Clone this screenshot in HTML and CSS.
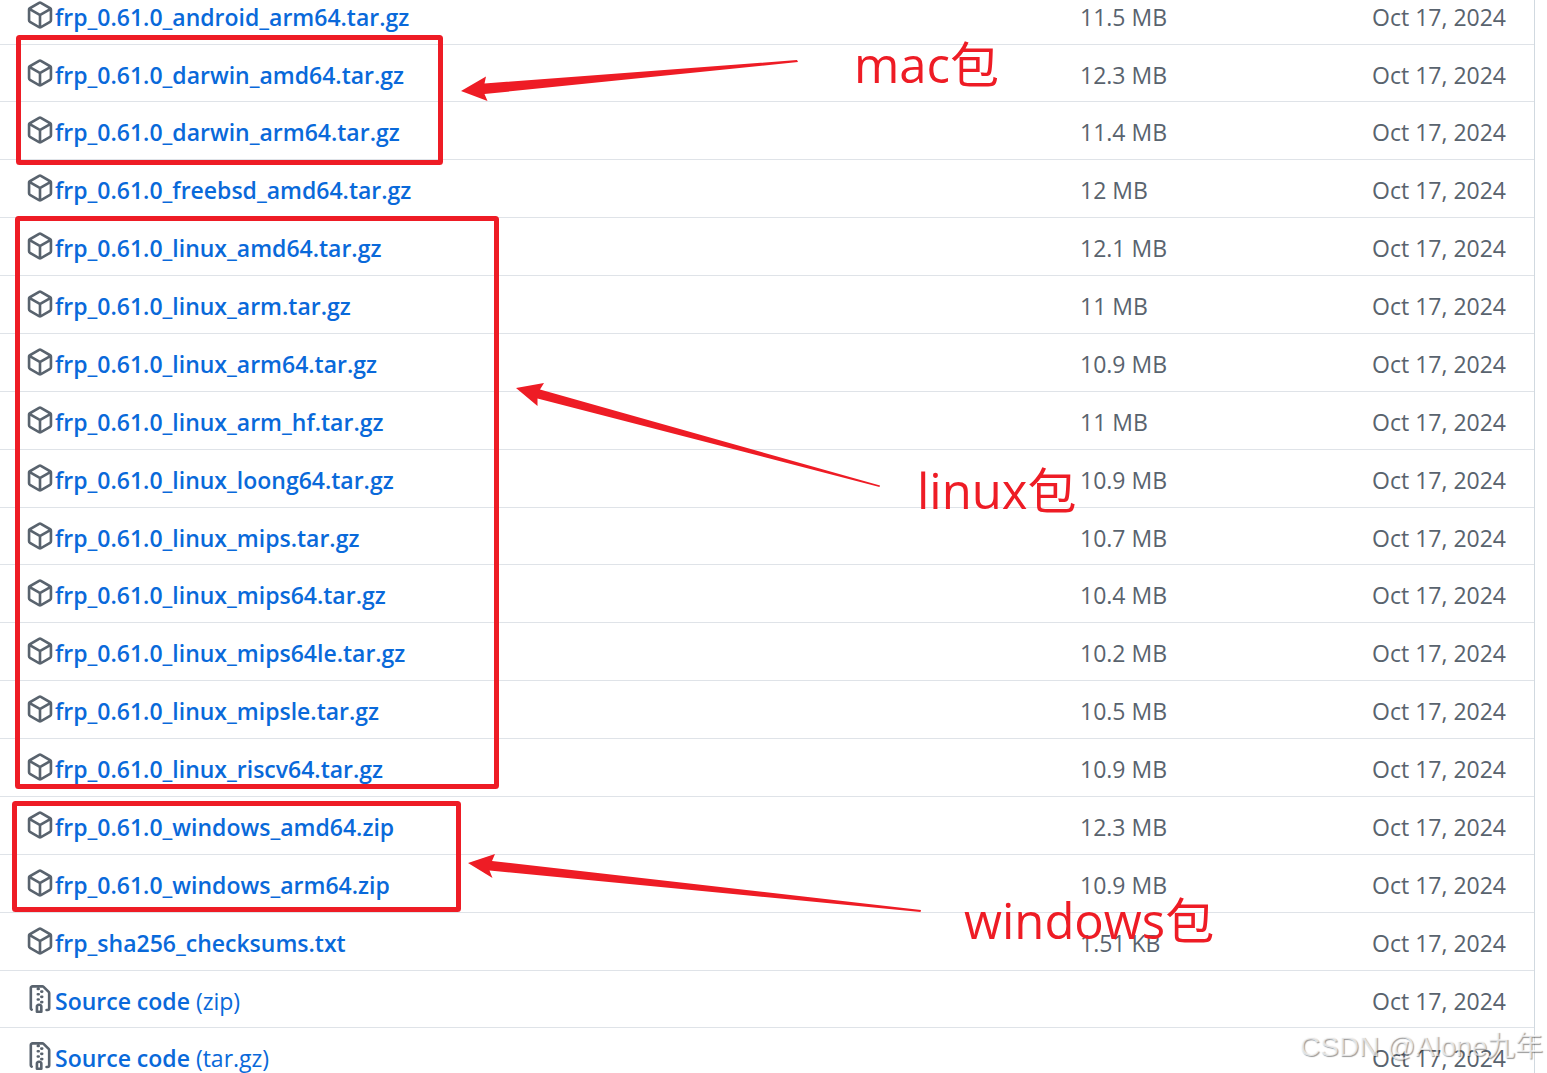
FILE: index.html
```
<!DOCTYPE html>
<html lang="en">
<head>
    <meta charset="UTF-8">
    <meta name="viewport" content="width=device-width, initial-scale=1.0">
    <title>frp 0.61.0 assets</title>
    <link rel="stylesheet" href="styles.css">
</head>
<body>
    <svg class="sprite" aria-hidden="true">
        <symbol id="package" viewBox="0 0 16 16">
            <path d="m8.878.392 5.25 3.045c.54.314.872.89.872 1.514v6.098a1.75 1.75 0 0 1-.872 1.514l-5.25 3.045a1.75 1.75 0 0 1-1.756 0l-5.25-3.045A1.75 1.75 0 0 1 1 11.049V4.951c0-.624.332-1.201.872-1.514L7.122.392a1.75 1.75 0 0 1 1.756 0ZM7.875 1.69l-4.63 2.685L8 7.133l4.755-2.758-4.63-2.685a.248.248 0 0 0-.25 0ZM2.5 5.677v5.372c0 .09.047.171.125.216l4.625 2.683V8.432Zm6.25 8.271 4.625-2.683a.25.25 0 0 0 .125-.216V5.677L8.75 8.432Z"/>
        </symbol>
        <symbol id="zip" viewBox="0 0 16 16">
            <path d="M3.5 1.75v11.5c0 .09.048.173.126.217a.75.75 0 0 1-.752 1.298A1.748 1.748 0 0 1 2 13.25V1.75C2 .784 2.784 0 3.75 0h5.586c.464 0 .909.185 1.237.513l2.914 2.914c.329.328.513.773.513 1.237v8.586A1.75 1.75 0 0 1 12.25 15h-.5a.75.75 0 0 1 0-1.5h.5a.25.25 0 0 0 .25-.25V4.664a.25.25 0 0 0-.073-.177L9.513 1.573a.25.25 0 0 0-.177-.073H7.25a.75.75 0 0 1 0 1.5h-.5a.75.75 0 0 1 0-1.5h-3a.25.25 0 0 0-.25.25Zm3.75 8.75h.5c.966 0 1.75.784 1.75 1.75v3a.75.75 0 0 1-.75.75h-2.5a.75.75 0 0 1-.75-.75v-3c0-.966.784-1.75 1.75-1.75ZM6 5.25a.75.75 0 0 1 .75-.75h.5a.75.75 0 0 1 0 1.5h-.5A.75.75 0 0 1 6 5.25Zm.75 2.25h.5a.75.75 0 0 1 0 1.5h-.5a.75.75 0 0 1 0-1.5ZM8 6.75A.75.75 0 0 1 8.75 6h.5a.75.75 0 0 1 0 1.5h-.5A.75.75 0 0 1 8 6.75ZM8.75 3h.5a.75.75 0 0 1 0 1.5h-.5a.75.75 0 0 1 0-1.5ZM8 9.75A.75.75 0 0 1 8.75 9h.5a.75.75 0 0 1 0 1.5h-.5A.75.75 0 0 1 8 9.75Zm-1 2.5v2.25h1v-2.25a.25.25 0 0 0-.25-.25h-.5a.25.25 0 0 0-.25.25Z"/>
        </symbol>
    </svg>

    <main class="release">
        <table class="assets">
            <tbody>
                <tr><td><div class="file"><svg class="icon"><use href="#package"/></svg><a href="#">frp_0.61.0_android_arm64.tar.gz</a></div></td><td class="size">11.5 MB</td><td class="date">Oct 17, 2024</td></tr>
                <tr><td><div class="file"><svg class="icon"><use href="#package"/></svg><a href="#">frp_0.61.0_darwin_amd64.tar.gz</a></div></td><td class="size">12.3 MB</td><td class="date">Oct 17, 2024</td></tr>
                <tr><td><div class="file"><svg class="icon"><use href="#package"/></svg><a href="#">frp_0.61.0_darwin_arm64.tar.gz</a></div></td><td class="size">11.4 MB</td><td class="date">Oct 17, 2024</td></tr>
                <tr><td><div class="file"><svg class="icon"><use href="#package"/></svg><a href="#">frp_0.61.0_freebsd_amd64.tar.gz</a></div></td><td class="size">12 MB</td><td class="date">Oct 17, 2024</td></tr>
                <tr><td><div class="file"><svg class="icon"><use href="#package"/></svg><a href="#">frp_0.61.0_linux_amd64.tar.gz</a></div></td><td class="size">12.1 MB</td><td class="date">Oct 17, 2024</td></tr>
                <tr><td><div class="file"><svg class="icon"><use href="#package"/></svg><a href="#">frp_0.61.0_linux_arm.tar.gz</a></div></td><td class="size">11 MB</td><td class="date">Oct 17, 2024</td></tr>
                <tr><td><div class="file"><svg class="icon"><use href="#package"/></svg><a href="#">frp_0.61.0_linux_arm64.tar.gz</a></div></td><td class="size">10.9 MB</td><td class="date">Oct 17, 2024</td></tr>
                <tr><td><div class="file"><svg class="icon"><use href="#package"/></svg><a href="#">frp_0.61.0_linux_arm_hf.tar.gz</a></div></td><td class="size">11 MB</td><td class="date">Oct 17, 2024</td></tr>
                <tr><td><div class="file"><svg class="icon"><use href="#package"/></svg><a href="#">frp_0.61.0_linux_loong64.tar.gz</a></div></td><td class="size">10.9 MB</td><td class="date">Oct 17, 2024</td></tr>
                <tr><td><div class="file"><svg class="icon"><use href="#package"/></svg><a href="#">frp_0.61.0_linux_mips.tar.gz</a></div></td><td class="size">10.7 MB</td><td class="date">Oct 17, 2024</td></tr>
                <tr><td><div class="file"><svg class="icon"><use href="#package"/></svg><a href="#">frp_0.61.0_linux_mips64.tar.gz</a></div></td><td class="size">10.4 MB</td><td class="date">Oct 17, 2024</td></tr>
                <tr><td><div class="file"><svg class="icon"><use href="#package"/></svg><a href="#">frp_0.61.0_linux_mips64le.tar.gz</a></div></td><td class="size">10.2 MB</td><td class="date">Oct 17, 2024</td></tr>
                <tr><td><div class="file"><svg class="icon"><use href="#package"/></svg><a href="#">frp_0.61.0_linux_mipsle.tar.gz</a></div></td><td class="size">10.5 MB</td><td class="date">Oct 17, 2024</td></tr>
                <tr><td><div class="file"><svg class="icon"><use href="#package"/></svg><a href="#">frp_0.61.0_linux_riscv64.tar.gz</a></div></td><td class="size">10.9 MB</td><td class="date">Oct 17, 2024</td></tr>
                <tr><td><div class="file"><svg class="icon"><use href="#package"/></svg><a href="#">frp_0.61.0_windows_amd64.zip</a></div></td><td class="size">12.3 MB</td><td class="date">Oct 17, 2024</td></tr>
                <tr><td><div class="file"><svg class="icon"><use href="#package"/></svg><a href="#">frp_0.61.0_windows_arm64.zip</a></div></td><td class="size">10.9 MB</td><td class="date">Oct 17, 2024</td></tr>
                <tr><td><div class="file"><svg class="icon"><use href="#package"/></svg><a href="#">frp_sha256_checksums.txt</a></div></td><td class="size">1.51 KB</td><td class="date">Oct 17, 2024</td></tr>
                <tr><td><div class="file"><svg class="icon"><use href="#zip"/></svg><a href="#">Source code <span class="format">(zip)</span></a></div></td><td class="size"></td><td class="date">Oct 17, 2024</td></tr>
                <tr><td><div class="file"><svg class="icon"><use href="#zip"/></svg><a href="#">Source code <span class="format">(tar.gz)</span></a></div></td><td class="size"></td><td class="date">Oct 17, 2024</td></tr>
            </tbody>
        </table>
    </main>

    <!-- hand drawn notes over the list -->
    <div class="notes">
        <svg class="marks" aria-hidden="true">
            <g class="frames">
                <rect x="18.5" y="37.5" width="422" height="125" rx="1"/>
                <rect x="17.5" y="218.5" width="479" height="568" rx="1"/>
                <rect x="14.5" y="803.5" width="444" height="106" rx="1"/>
            </g>
            <g class="arrows">
                <polygon points="461,91 486,76.5 484.5,83.5 797,60 798,62 484.5,94 487.5,101"/>
                <polygon points="516,388 544,383 540,389.5 880,485.5 879.5,487 537.5,398.5 537.5,406"/>
                <polygon points="468,863 495,854 492,861 921,910 920.5,912 489.5,870.5 492.5,878"/>
            </g>
        </svg>
        <span class="label mac">mac包</span>
        <span class="label linux">linux包</span>
        <span class="label windows">windows包</span>
        <span class="watermark">CSDN @Alone九年</span>
    </div>
</body>
</html>
```
FILE: styles.css
```
* {
    box-sizing: border-box;
}
body {
    position: relative;
    height: 100vh;
    margin: 0;
    overflow: hidden;
    background-color: #fff;
    color: #59636e;
    font-family: "Segoe UI", "Open Sans", "Noto Sans CJK SC", sans-serif;
    font-size: 23px;
    line-height: 36px;
}
.sprite {
    position: absolute;
    width: 0;
    height: 0;
}
/* the list is scrolled part of a row down */
.release {
    margin: -13px 12px 0 0;
    border-right: 1px solid #d1d9e0;
}
.assets {
    width: 100%;
    table-layout: fixed;
    border-collapse: separate;
    border-spacing: 0;
}
.assets tr {
    height: 58px;
}
.assets tr:nth-child(8n+2) {
    height: 57px;
}
.assets td {
    padding: 12px 0 0;
    border-bottom: 1px solid #dfe3e8;
    vertical-align: top;
    white-space: nowrap;
}
.file {
    display: flex;
    align-items: center;
    padding-left: 26px;
}
.icon {
    flex: none;
    width: 28px;
    height: 28px;
    margin: 0 1px 4px 0;
    fill: #59636e;
}
.file a {
    color: #0969da;
    font-weight: 600;
    text-decoration: none;
}
.file a:hover {
    text-decoration: underline;
}
.format {
    font-weight: 400;
}
.assets .size {
    width: 290px;
}
.assets .date {
    width: 164px;
    padding-right: 28px;
    text-align: right;
}
.notes {
    position: absolute;
    inset: 0;
    pointer-events: none;
}
.marks {
    width: 100%;
    height: 100%;
}
.frames {
    fill: none;
    stroke: #ee1c25;
    stroke-width: 5;
}
.arrows {
    fill: #ee1c25;
}
.label {
    position: absolute;
    color: #ee1c25;
    font-size: 49px;
    line-height: 64px;
    white-space: nowrap;
}
.mac {
    left: 854px;
    top: 32px;
}
.linux {
    left: 917px;
    top: 458px;
}
.windows {
    left: 964px;
    top: 888px;
}
.watermark {
    position: absolute;
    right: 4px;
    bottom: 6px;
    color: rgba(255, 255, 255, 0.7);
    font-family: "Liberation Sans", "Noto Sans CJK SC", sans-serif;
    font-size: 28px;
    line-height: 40px;
    text-shadow: 1px 1px 1px rgba(0, 0, 0, 0.4);
    white-space: nowrap;
}
```
